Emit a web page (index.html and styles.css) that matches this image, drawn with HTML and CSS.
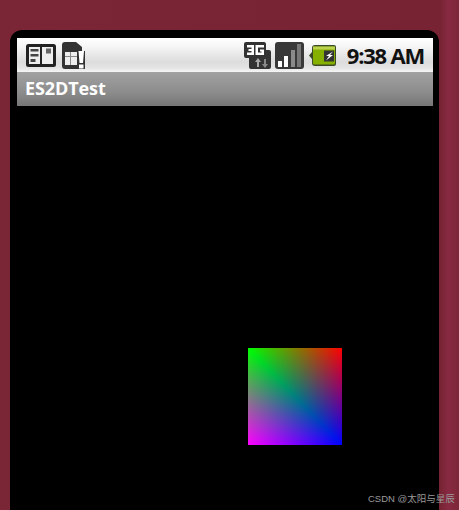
FILE: index.html
```html
<!DOCTYPE html>
<html lang="en">
<head>
    <meta charset="UTF-8">
    <meta name="viewport" content="width=device-width, initial-scale=1.0">
    <title>ES2DTest</title>
    <link rel="stylesheet" href="styles.css">
</head>
<body>

    <div class="phone">
        <div class="screen">

            <!-- Status bar -->
            <div class="status-bar">
                <svg class="icon icon-news" viewBox="0 0 30 23">
                    <rect x="0" y="0" width="30" height="23" rx="2.5" fill="#222"/>
                    <rect x="3" y="3" width="24" height="17" fill="#eee"/>
                    <rect x="14" y="3" width="2" height="17" fill="#222"/>
                    <rect x="4.5" y="5" width="8" height="2.500" fill="#444"/>
                    <rect x="4.5" y="10" width="8" height="2.500" fill="#444"/>
                    <rect x="4.5" y="15" width="5" height="3" fill="#444"/>
                    <rect x="20" y="4.5" width="5" height="5" fill="#666"/>
                </svg>
                <svg class="icon icon-sim" viewBox="0 0 23 27">
                    <path d="M0 3 Q0 0 3 0 H14 L20 5 V9 H23 V27 H3 Q0 27 0 24 Z" fill="#333"/>
                    <rect x="3" y="10" width="12" height="13" fill="#eee"/>
                    <rect x="3" y="14" width="12" height="1" fill="#888"/>
                    <rect x="8" y="10" width="1" height="13" fill="#888"/>
                    <path d="M16.500 9 H22 L21 21 H17.500 Z" fill="#fff"/>
                    <rect x="17" y="22.500" width="4.500" height="4" fill="#fff"/>
                </svg>
                <div class="status-right">
                    <svg class="icon icon-net" viewBox="0 0 27 27">
                        <path d="M0 2 Q0 0 2 0 H20 Q22 0 22 2 V8 H25 Q27 8 27 10 V25 Q27 27 25 27 H7 Q5 27 5 25 V16 H2 Q0 16 0 14 Z" fill="#333"/>
                        <path d="M3 3 H10 V13 H3 V10.500 H7.500 V9 H4.500 V7 H7.500 V5.500 H3 Z" fill="#fff"/>
                        <path d="M11.500 3 H20 V5.500 H14 V10.500 H17.500 V9.500 H16 V7.500 H20 V13 H11.500 Z" fill="#fff"/>
                        <path d="M13 25 V20 H11 L14 16 L17 20 H15 V25 Z" fill="#aaa"/>
                        <path d="M20 17 V22 H18 L21 26 L24 22 H22 V17 Z" fill="#888"/>
                    </svg>
                    <svg class="icon icon-signal" viewBox="0 0 29 27">
                        <rect x="0" y="0" width="29" height="27" rx="3" fill="#383838"/>
                        <rect x="3" y="19" width="4" height="6" fill="#fff"/>
                        <rect x="9" y="14" width="4" height="11" fill="#fff"/>
                        <rect x="16" y="8" width="4" height="17" fill="#8a8a8a"/>
                        <rect x="22" y="2" width="4" height="23" fill="#777"/>
                    </svg>
                    <svg class="icon icon-battery" viewBox="0 0 27 21">
                        <path d="M0 10.500 L3 7 V3 Q3 0 6 0 H25 Q27 0 27 2 V19 Q27 21 25 21 H6 Q3 21 3 18 V14 Z" fill="#3c4a28"/>
                        <rect x="4" y="1.500" width="22" height="18" rx="1.500" fill="#86b000"/>
                        <rect x="4" y="1.500" width="22" height="3" fill="#bcd24c"/>
                        <rect x="15" y="5.500" width="10" height="11" fill="#333"/>
                        <path d="M24 6.500 L17 11 H20 L17 15.500 L24 10 H21 Z" fill="#fff"/>
                    </svg>
                    <span class="clock">9:38 AM</span>
                </div>
            </div>

            <div class="title-bar">ES2DTest</div>

            <!-- GL surface -->
            <div class="surface">
                <div class="quad">
                    <div class="quad-rb"></div>
                </div>
            </div>
        </div>
    </div>

    <div class="watermark">CSDN @太阳与星辰</div>

</body>
</html>
```

FILE: styles.css
```css
* {
    margin: 0;
    padding: 0;
    box-sizing: border-box;
}
html, body {
    height: 510px;
    overflow: hidden;
}
body {
    background: linear-gradient(to right, #7a2636 0, #772333 440px, #872a42 448px, #7c2739 459px);
    padding: 30px 0 0 10px;
    position: relative;
    font-family: "Open Sans", Arial, sans-serif;
}
.phone {
    width: 429px;
    height: 480px;
    background: #000;
    border-radius: 12px 12px 0 0;
    padding: 8px 6px 0 7px;
}
.screen {
    height: 100%;
    display: flex;
    flex-direction: column;
}
.status-bar {
    height: 34px;
    background: linear-gradient(to bottom, #fff 0, #f6f6f6 25%, #dcdcdc 70%, #e4e4e4 88%, #f6f6f6 100%);
    display: flex;
    align-items: center;
    padding: 0 9px;
}
.icon {
    filter: blur(0.4px);
}
.icon-news {
    width: 30px;
    height: 23px;
    margin-right: 6px;
}
.icon-sim {
    width: 23px;
    height: 27px;
}
.status-right {
    margin-left: auto;
    display: flex;
    align-items: center;
}
.icon-net {
    width: 27px;
    height: 27px;
    margin-right: 4px;
}
.icon-signal {
    width: 29px;
    height: 27px;
    margin-right: 5px;
}
.icon-battery {
    width: 27px;
    height: 21px;
    margin-right: 11px;
}
.clock {
    font-size: 22px;
    font-weight: 700;
    letter-spacing: -1.2px;
    color: #111;
    white-space: nowrap;
}
.title-bar {
    height: 34px;
    background: linear-gradient(to bottom, #a2a2a2, #8c8c8c 60%, #767676);
    color: #fff;
    font-size: 18px;
    font-weight: 700;
    letter-spacing: -0.1px;
    line-height: 33px;
    padding-left: 8px;
}
.surface {
    flex: 1;
    background: #000;
    padding: 242px 0 0 231px;
}
/* green channel: fades towards the right and bottom edges */
.quad {
    width: 94px;
    height: 97px;
    background-image: linear-gradient(to right, #0f0, #000), linear-gradient(to bottom, #0f0, #000);
    background-blend-mode: darken;
    isolation: isolate;
}
/* red runs out from the green-blue diagonal, blue grows downwards */
.quad-rb {
    width: 100%;
    height: 100%;
    background-image: linear-gradient(to top right, #f00, #000 50%, #f00), linear-gradient(to bottom, #000, #00f);
    background-blend-mode: screen;
    mix-blend-mode: screen;
}
.watermark {
    position: absolute;
    left: 368px;
    top: 491px;
    font-family: "Liberation Sans", "Noto Sans CJK SC", sans-serif;
    font-size: 9.5px;
    color: #9a9a9a;
    white-space: nowrap;
}
```
